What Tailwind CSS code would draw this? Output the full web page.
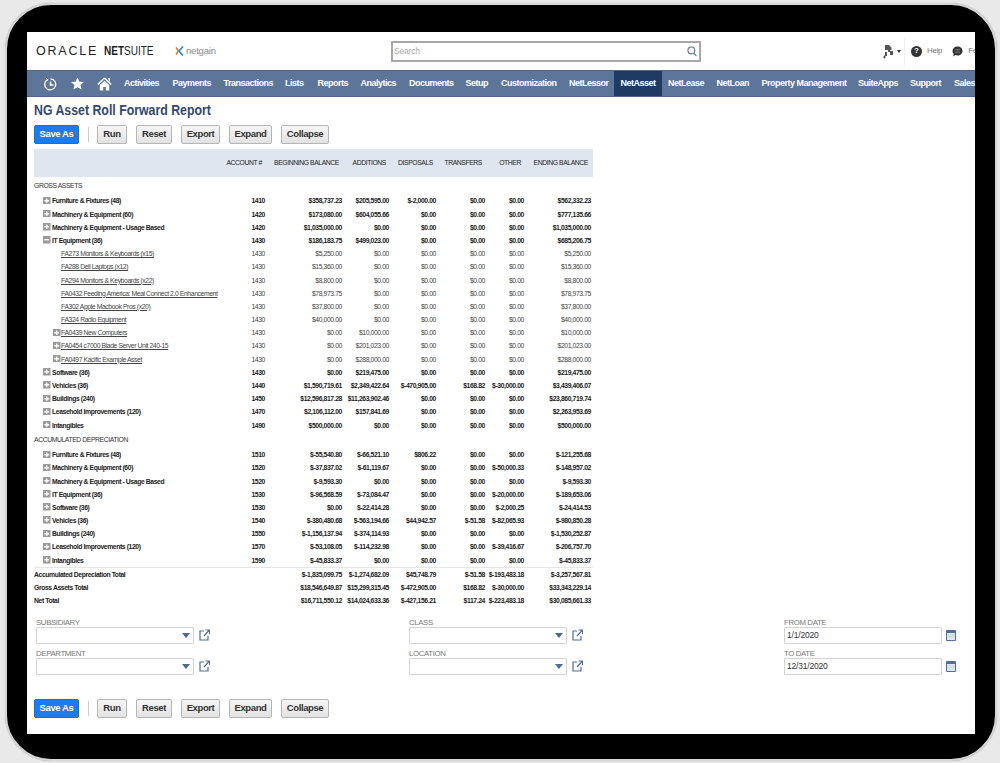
<!DOCTYPE html>
<html lang="en">
<head>
  <meta charset="UTF-8" />
  <title>NG Asset Roll Forward Report</title>
  <script src="https://cdn.jsdelivr.net/npm/@tailwindcss/browser@4"></script>
</head>
<body class="bg-[#e9e9e9] font-['Liberation_Sans',sans-serif] overflow-hidden">
<div class="w-[1000px] h-[763px] pt-[3px] pl-[5px]">
  <!-- tablet frame -->
  <div class="w-[992px] h-[758px] rounded-[46px] border-2 border-[#d6d6d6] bg-black pt-[27px] pl-[20px] shadow-[0_0_1px_#999]">
    <div class="w-[948px] h-[702px] bg-white overflow-hidden flex flex-col">

      <!-- top bar -->
      <header class="h-[38px] shrink-0 flex items-center overflow-hidden">
        <div class="ml-[9px] w-[130px] shrink-0 flex items-center text-[#222] whitespace-nowrap">
          <span class="text-[12.5px] tracking-[1.8px]">ORACLE</span>
          <span class="ml-[6px] inline-block origin-left scale-x-[0.8] text-[12.5px]"><b>NET</b>SUITE</span>
        </div>
        <div class="ml-[9px] w-[42px] shrink-0 flex items-center gap-[2px]">
          <svg class="shrink-0" width="9" height="10" viewBox="0 0 9 10"><path d="M1 1.500 3.500 5 1 8.500" fill="none" stroke="#e8792b" stroke-width="1.600"/><path d="M8 .5 4 5l4 4.500" fill="none" stroke="#2d8fd5" stroke-width="1.800"/></svg>
          <span class="text-[9.5px] tracking-[-0.2px] text-[#888]">netgain</span>
        </div>
        <div class="ml-[174px] w-[310px] shrink-0 h-[21px] border-2 border-[#a8a8a8] flex items-center justify-between pl-[1px] pr-[2px]">
          <span class="text-[8.5px] tracking-[-0.2px] text-[#aaa]">Search</span>
          <svg width="10" height="11" viewBox="0 0 11 12" fill="none" stroke="#5d7599" stroke-width="1.200"><circle cx="4.800" cy="4.800" r="3.800"/><path d="m7.500 7.800 2.800 3.200"/></svg>
        </div>
        <div class="ml-[181px] shrink-0 flex items-center whitespace-nowrap">
          <svg width="14" height="15" viewBox="0 0 14 15" fill="#555"><path d="M3 1h4l2.500 2.500V6H8v2H6V6H3zM8 7h3v4H8zM3 8h2v4H3z"/><path d="M1 13h3M2.500 11.500v3" stroke="#555" fill="none"/></svg>
          <svg class="ml-[1px]" width="4" height="3" viewBox="0 0 4 3" fill="#333"><path d="M0 0h4L2 3z"/></svg>
          <div class="ml-[3px] w-px h-[27px] bg-[#eee]"></div>
          <span class="ml-[6px] w-[11px] h-[11px] rounded-full bg-[#333] text-white text-[8px] font-bold flex items-center justify-center">?</span>
          <span class="ml-[5px] text-[8px] tracking-[-0.3px] text-[#777]">Help</span>
          <svg class="ml-[10px]" width="11" height="11" viewBox="0 0 11 11"><path d="M5.500.5C8.500.5 10.500 2.500 10.500 5s-2 4.500-5 4.500c-.8 0-1.500-.1-2-.4L1 10.500l.7-2.500C1 7.200.5 6.200.5 5 .5 2.500 2.500.5 5.500.5z" fill="#333"/><path d="M3 3.500h5M3 5h5M3 6.500h5" stroke="#888" stroke-width=".6"/></svg>
          <span class="ml-[5px] text-[8px] tracking-[-0.3px] text-[#777]">Feedback</span>
        </div>
      </header>

      <!-- nav -->
      <nav class="h-[27px] shrink-0 bg-[#5d7599] border-y border-[#4d6588] flex items-stretch text-white text-[9px] tracking-[-0.5px] font-bold whitespace-nowrap overflow-hidden">
        <div class="w-[97px] shrink-0 flex items-center pl-[17px]">
          <svg width="13" height="14" viewBox="0 0 13 14" fill="none" stroke="#fff" stroke-width="1.300"><path d="M3.500 2.500A5.500 5.500 0 1 0 6.500 1.800"/><path d="M1.800 1 3.800 2.600 2.200 4.400" stroke-width="1"/><path d="M6.500 4.500v3.500h3" stroke-width="1.500"/></svg>
          <svg class="ml-[14px]" width="13" height="13" viewBox="0 0 13 13" fill="#fff"><path d="M6.500.4 8.400 4.700l4.600.4-3.500 3 1.100 4.500-4.100-2.400-4.100 2.400 1.100-4.500L0 5.100l4.600-.4z"/></svg>
          <svg class="ml-[13px]" width="15" height="14" viewBox="0 0 15 14"><path d="M7.500 1 .8 7.500M7.500 1l6.700 6.500" fill="none" stroke="#fff" stroke-width="1.500"/><path d="M2.800 8 7.500 3.700 12.200 8v5.500H8.800V10H6.200v3.500H2.800z" fill="#fff"/><path d="M11 1.500h1.500v3" fill="#fff" stroke="#fff"/></svg>
        </div>
        <a class="flex items-center shrink-0 w-[48.5px]">Activities</a>
        <a class="flex items-center shrink-0 w-[51px]">Payments</a>
        <a class="flex items-center shrink-0 w-[61.5px]">Transactions</a>
        <a class="flex items-center shrink-0 w-[32.5px]">Lists</a>
        <a class="flex items-center shrink-0 w-[43px]">Reports</a>
        <a class="flex items-center shrink-0 w-[48.5px]">Analytics</a>
        <a class="flex items-center shrink-0 w-[56.5px]">Documents</a>
        <a class="flex items-center shrink-0 w-[35.5px]">Setup</a>
        <a class="flex items-center shrink-0 w-[68px]">Customization</a>
        <a class="flex items-center shrink-0 w-[45px]">NetLessor</a>
        <a class="flex items-center shrink-0 justify-center w-[48px] bg-[#1f3a63]">NetAsset</a>
        <a class="flex items-center shrink-0 w-[48.5px] ml-[6px]">NetLease</a>
        <a class="flex items-center shrink-0 w-[45px]">NetLoan</a>
        <a class="flex items-center shrink-0 w-[96.5px]">Property Management</a>
        <a class="flex items-center shrink-0 w-[52px]">SuiteApps</a>
        <a class="flex items-center shrink-0 w-[44px]">Support</a>
        <a class="flex items-center shrink-0">Sales</a>
      </nav>

      <main class="flex-1 pl-[7px]">
        <h1 class="h-[28px] flex items-center origin-left scale-x-[0.85] text-[14.5px] font-bold text-[#33486b] whitespace-nowrap">NG Asset Roll Forward Report</h1>

        <div class="h-[19px] flex items-stretch gap-[9px] text-[9.5px] tracking-[-0.4px] font-bold text-[#333]">
          <button class="w-[45px] rounded-[2px] bg-[#1c7cec] border border-[#1a6ed0] text-white">Save As</button>
          <span class="w-px -mr-[1px] my-[2px] bg-[#ccc]"></span>
          <button class="w-[30px] rounded-[2px] bg-gradient-to-b from-[#f6f6f6] to-[#e2e2e2] border border-[#b5b5b5]">Run</button>
          <button class="w-[36px] rounded-[2px] bg-gradient-to-b from-[#f6f6f6] to-[#e2e2e2] border border-[#b5b5b5]">Reset</button>
          <button class="w-[39px] rounded-[2px] bg-gradient-to-b from-[#f6f6f6] to-[#e2e2e2] border border-[#b5b5b5]">Export</button>
          <button class="w-[43px] rounded-[2px] bg-gradient-to-b from-[#f6f6f6] to-[#e2e2e2] border border-[#b5b5b5]">Expand</button>
          <button class="w-[48px] rounded-[2px] bg-gradient-to-b from-[#f6f6f6] to-[#e2e2e2] border border-[#b5b5b5]">Collapse</button>
        </div>

        <!-- report table -->
        <div class="mt-[5px] w-[559px] text-[6.8px] tracking-[-0.4px] text-[#222] whitespace-nowrap">
          <div class="h-[28px] bg-[#dfe6ef] pr-[2px] grid grid-cols-[201px_30px_77px_47px_47px_49px_39px_67px] items-center text-right [&>span]:pr-[3px]">
            <span></span><span class="-ml-[10px]">ACCOUNT #</span><span>BEGINNING BALANCE</span><span>ADDITIONS</span><span>DISPOSALS</span><span>TRANSFERS</span><span>OTHER</span><span>ENDING BALANCE</span>
          </div>

          <div class="h-[17.9px] flex items-center text-[#333]">GROSS ASSETS</div>
          <div class="pr-[2px] grid grid-cols-[201px_30px_77px_47px_47px_49px_39px_67px] auto-rows-[13.2px] items-center text-right [&>div]:contents">
            <div class="font-bold"><span class="flex items-center text-left pl-[9px]"><svg class="w-[7.5px] h-[7.5px] -mt-[2px] mr-[1.5px]" viewBox="0 0 8 8"><rect width="8" height="8" fill="#9a9a9a"/><path d="M1.500 4h5M4 1.500v5" stroke="#fff" stroke-width="1.400"/></svg>Furniture &amp; Fixtures (48)</span><span>1410</span><span>$358,737.23</span><span>$205,595.00</span><span>$-2,000.00</span><span>$0.00</span><span>$0.00</span><span>$562,332.23</span></div>
            <div class="font-bold"><span class="flex items-center text-left pl-[9px]"><svg class="w-[7.5px] h-[7.5px] -mt-[2px] mr-[1.5px]" viewBox="0 0 8 8"><rect width="8" height="8" fill="#9a9a9a"/><path d="M1.500 4h5M4 1.500v5" stroke="#fff" stroke-width="1.400"/></svg>Machinery &amp; Equipment (60)</span><span>1420</span><span>$173,080.00</span><span>$604,055.66</span><span>$0.00</span><span>$0.00</span><span>$0.00</span><span>$777,135.66</span></div>
            <div class="font-bold"><span class="flex items-center text-left pl-[9px]"><svg class="w-[7.5px] h-[7.5px] -mt-[2px] mr-[1.5px]" viewBox="0 0 8 8"><rect width="8" height="8" fill="#9a9a9a"/><path d="M1.500 4h5M4 1.500v5" stroke="#fff" stroke-width="1.400"/></svg>Machinery &amp; Equipment - Usage Based</span><span>1420</span><span>$1,035,000.00</span><span>$0.00</span><span>$0.00</span><span>$0.00</span><span>$0.00</span><span>$1,035,000.00</span></div>
            <div class="font-bold"><span class="flex items-center text-left pl-[9px]"><svg class="w-[7.5px] h-[7.5px] -mt-[2px] mr-[1.5px]" viewBox="0 0 8 8"><rect width="8" height="8" fill="#9a9a9a"/><path d="M1.500 4h5" stroke="#fff" stroke-width="1.400"/></svg>IT Equipment (36)</span><span>1430</span><span>$186,183.75</span><span>$499,023.00</span><span>$0.00</span><span>$0.00</span><span>$0.00</span><span>$685,206.75</span></div>
            <div class="text-[#444]"><span class="text-left pl-[27px] underline">FA273 Monitors &amp; Keyboards (x15)</span><span>1430</span><span>$5,250.00</span><span>$0.00</span><span>$0.00</span><span>$0.00</span><span>$0.00</span><span>$5,250.00</span></div>
            <div class="text-[#444]"><span class="text-left pl-[27px] underline">FA288 Dell Laptops (x12)</span><span>1430</span><span>$15,360.00</span><span>$0.00</span><span>$0.00</span><span>$0.00</span><span>$0.00</span><span>$15,360.00</span></div>
            <div class="text-[#444]"><span class="text-left pl-[27px] underline">FA294 Monitors &amp; Keyboards (x22)</span><span>1430</span><span>$8,800.00</span><span>$0.00</span><span>$0.00</span><span>$0.00</span><span>$0.00</span><span>$8,800.00</span></div>
            <div class="text-[#444]"><span class="text-left pl-[27px] underline">FA0432 Feeding America: Meal Connect 2.0 Enhancement</span><span>1430</span><span>$78,973.75</span><span>$0.00</span><span>$0.00</span><span>$0.00</span><span>$0.00</span><span>$78,973.75</span></div>
            <div class="text-[#444]"><span class="text-left pl-[27px] underline">FA302 Apple Macbook Pros (x20)</span><span>1430</span><span>$37,800.00</span><span>$0.00</span><span>$0.00</span><span>$0.00</span><span>$0.00</span><span>$37,800.00</span></div>
            <div class="text-[#444]"><span class="text-left pl-[27px] underline">FA324 Radio Equipment</span><span>1430</span><span>$40,000.00</span><span>$0.00</span><span>$0.00</span><span>$0.00</span><span>$0.00</span><span>$40,000.00</span></div>
            <div class="text-[#444]"><span class="flex items-center text-left pl-[19px]"><svg class="w-[7.5px] h-[7.5px] -mt-[2px] mr-[.5px] shrink-0" viewBox="0 0 8 8"><rect width="8" height="8" fill="#9a9a9a"/><path d="M1.500 4h5M4 1.500v5" stroke="#fff" stroke-width="1.400"/></svg><u>FA0439 New Computers</u></span><span>1430</span><span>$0.00</span><span>$10,000.00</span><span>$0.00</span><span>$0.00</span><span>$0.00</span><span>$10,000.00</span></div>
            <div class="text-[#444]"><span class="flex items-center text-left pl-[19px]"><svg class="w-[7.5px] h-[7.5px] -mt-[2px] mr-[.5px] shrink-0" viewBox="0 0 8 8"><rect width="8" height="8" fill="#9a9a9a"/><path d="M1.500 4h5M4 1.500v5" stroke="#fff" stroke-width="1.400"/></svg><u>FA0454 c7000 Blade Server Unit 240-15</u></span><span>1430</span><span>$0.00</span><span>$201,023.00</span><span>$0.00</span><span>$0.00</span><span>$0.00</span><span>$201,023.00</span></div>
            <div class="text-[#444]"><span class="flex items-center text-left pl-[19px]"><svg class="w-[7.5px] h-[7.5px] -mt-[2px] mr-[.5px] shrink-0" viewBox="0 0 8 8"><rect width="8" height="8" fill="#9a9a9a"/><path d="M1.500 4h5M4 1.500v5" stroke="#fff" stroke-width="1.400"/></svg><u>FA0497 Kacific Example Asset</u></span><span>1430</span><span>$0.00</span><span>$288,000.00</span><span>$0.00</span><span>$0.00</span><span>$0.00</span><span>$288,000.00</span></div>
            <div class="font-bold"><span class="flex items-center text-left pl-[9px]"><svg class="w-[7.5px] h-[7.5px] -mt-[2px] mr-[1.5px]" viewBox="0 0 8 8"><rect width="8" height="8" fill="#9a9a9a"/><path d="M1.500 4h5M4 1.500v5" stroke="#fff" stroke-width="1.400"/></svg>Software (36)</span><span>1430</span><span>$0.00</span><span>$219,475.00</span><span>$0.00</span><span>$0.00</span><span>$0.00</span><span>$219,475.00</span></div>
            <div class="font-bold"><span class="flex items-center text-left pl-[9px]"><svg class="w-[7.5px] h-[7.5px] -mt-[2px] mr-[1.5px]" viewBox="0 0 8 8"><rect width="8" height="8" fill="#9a9a9a"/><path d="M1.500 4h5M4 1.500v5" stroke="#fff" stroke-width="1.400"/></svg>Vehicles (36)</span><span>1440</span><span>$1,590,719.61</span><span>$2,349,422.64</span><span>$-470,905.00</span><span>$168.82</span><span>$-30,000.00</span><span>$3,439,406.07</span></div>
            <div class="font-bold"><span class="flex items-center text-left pl-[9px]"><svg class="w-[7.5px] h-[7.5px] -mt-[2px] mr-[1.5px]" viewBox="0 0 8 8"><rect width="8" height="8" fill="#9a9a9a"/><path d="M1.500 4h5M4 1.500v5" stroke="#fff" stroke-width="1.400"/></svg>Buildings (240)</span><span>1450</span><span>$12,596,817.28</span><span>$11,263,902.46</span><span>$0.00</span><span>$0.00</span><span>$0.00</span><span>$23,860,719.74</span></div>
            <div class="font-bold"><span class="flex items-center text-left pl-[9px]"><svg class="w-[7.5px] h-[7.5px] -mt-[2px] mr-[1.5px]" viewBox="0 0 8 8"><rect width="8" height="8" fill="#9a9a9a"/><path d="M1.500 4h5M4 1.500v5" stroke="#fff" stroke-width="1.400"/></svg>Leasehold Improvements (120)</span><span>1470</span><span>$2,106,112.00</span><span>$157,841.69</span><span>$0.00</span><span>$0.00</span><span>$0.00</span><span>$2,263,953.69</span></div>
            <div class="font-bold"><span class="flex items-center text-left pl-[9px]"><svg class="w-[7.5px] h-[7.5px] -mt-[2px] mr-[1.5px]" viewBox="0 0 8 8"><rect width="8" height="8" fill="#9a9a9a"/><path d="M1.500 4h5M4 1.500v5" stroke="#fff" stroke-width="1.400"/></svg>Intangibles</span><span>1490</span><span>$500,000.00</span><span>$0.00</span><span>$0.00</span><span>$0.00</span><span>$0.00</span><span>$500,000.00</span></div>
          </div>

          <div class="h-[16.4px] flex items-center text-[#333]">ACCUMULATED DEPRECIATION</div>
          <div class="pr-[2px] grid grid-cols-[201px_30px_77px_47px_47px_49px_39px_67px] auto-rows-[13.2px] items-center text-right font-bold [&>div]:contents">
            <div><span class="flex items-center text-left pl-[9px]"><svg class="w-[7.5px] h-[7.5px] -mt-[2px] mr-[1.5px]" viewBox="0 0 8 8"><rect width="8" height="8" fill="#9a9a9a"/><path d="M1.500 4h5M4 1.500v5" stroke="#fff" stroke-width="1.400"/></svg>Furniture &amp; Fixtures (48)</span><span>1510</span><span>$-55,540.80</span><span>$-66,521.10</span><span>$806.22</span><span>$0.00</span><span>$0.00</span><span>$-121,255.68</span></div>
            <div><span class="flex items-center text-left pl-[9px]"><svg class="w-[7.5px] h-[7.5px] -mt-[2px] mr-[1.5px]" viewBox="0 0 8 8"><rect width="8" height="8" fill="#9a9a9a"/><path d="M1.500 4h5M4 1.500v5" stroke="#fff" stroke-width="1.400"/></svg>Machinery &amp; Equipment (60)</span><span>1520</span><span>$-37,837.02</span><span>$-61,119.67</span><span>$0.00</span><span>$0.00</span><span>$-50,000.33</span><span>$-148,957.02</span></div>
            <div><span class="flex items-center text-left pl-[9px]"><svg class="w-[7.5px] h-[7.5px] -mt-[2px] mr-[1.5px]" viewBox="0 0 8 8"><rect width="8" height="8" fill="#9a9a9a"/><path d="M1.500 4h5M4 1.500v5" stroke="#fff" stroke-width="1.400"/></svg>Machinery &amp; Equipment - Usage Based</span><span>1520</span><span>$-9,593.30</span><span>$0.00</span><span>$0.00</span><span>$0.00</span><span>$0.00</span><span>$-9,593.30</span></div>
            <div><span class="flex items-center text-left pl-[9px]"><svg class="w-[7.5px] h-[7.5px] -mt-[2px] mr-[1.5px]" viewBox="0 0 8 8"><rect width="8" height="8" fill="#9a9a9a"/><path d="M1.500 4h5M4 1.500v5" stroke="#fff" stroke-width="1.400"/></svg>IT Equipment (36)</span><span>1530</span><span>$-96,568.59</span><span>$-73,084.47</span><span>$0.00</span><span>$0.00</span><span>$-20,000.00</span><span>$-189,653.06</span></div>
            <div><span class="flex items-center text-left pl-[9px]"><svg class="w-[7.5px] h-[7.5px] -mt-[2px] mr-[1.5px]" viewBox="0 0 8 8"><rect width="8" height="8" fill="#9a9a9a"/><path d="M1.500 4h5M4 1.500v5" stroke="#fff" stroke-width="1.400"/></svg>Software (36)</span><span>1530</span><span>$0.00</span><span>$-22,414.28</span><span>$0.00</span><span>$0.00</span><span>$-2,000.25</span><span>$-24,414.53</span></div>
            <div><span class="flex items-center text-left pl-[9px]"><svg class="w-[7.5px] h-[7.5px] -mt-[2px] mr-[1.5px]" viewBox="0 0 8 8"><rect width="8" height="8" fill="#9a9a9a"/><path d="M1.500 4h5M4 1.500v5" stroke="#fff" stroke-width="1.400"/></svg>Vehicles (36)</span><span>1540</span><span>$-380,480.68</span><span>$-563,194.66</span><span>$44,942.57</span><span>$-51.58</span><span>$-82,065.93</span><span>$-980,850.28</span></div>
            <div><span class="flex items-center text-left pl-[9px]"><svg class="w-[7.5px] h-[7.5px] -mt-[2px] mr-[1.5px]" viewBox="0 0 8 8"><rect width="8" height="8" fill="#9a9a9a"/><path d="M1.500 4h5M4 1.500v5" stroke="#fff" stroke-width="1.400"/></svg>Buildings (240)</span><span>1550</span><span>$-1,156,137.94</span><span>$-374,114.93</span><span>$0.00</span><span>$0.00</span><span>$0.00</span><span>$-1,530,252.87</span></div>
            <div><span class="flex items-center text-left pl-[9px]"><svg class="w-[7.5px] h-[7.5px] -mt-[2px] mr-[1.5px]" viewBox="0 0 8 8"><rect width="8" height="8" fill="#9a9a9a"/><path d="M1.500 4h5M4 1.500v5" stroke="#fff" stroke-width="1.400"/></svg>Leasehold Improvements (120)</span><span>1570</span><span>$-53,108.05</span><span>$-114,232.98</span><span>$0.00</span><span>$0.00</span><span>$-39,416.67</span><span>$-206,757.70</span></div>
            <div><span class="flex items-center text-left pl-[9px]"><svg class="w-[7.5px] h-[7.5px] -mt-[2px] mr-[1.5px]" viewBox="0 0 8 8"><rect width="8" height="8" fill="#9a9a9a"/><path d="M1.500 4h5M4 1.500v5" stroke="#fff" stroke-width="1.400"/></svg>Intangibles</span><span>1590</span><span>$-45,833.37</span><span>$0.00</span><span>$0.00</span><span>$0.00</span><span>$0.00</span><span>$-45,833.37</span></div>
          </div>

          <div class="pr-[2px] border-t border-[#e6e6e6] grid grid-cols-[201px_30px_77px_47px_47px_49px_39px_67px] auto-rows-[13.2px] items-center text-right font-bold [&>div]:contents">
            <div><span class="text-left">Accumulated Depreciation Total</span><span></span><span>$-1,835,099.75</span><span>$-1,274,682.09</span><span>$45,748.79</span><span>$-51.58</span><span>$-193,483.18</span><span>$-3,257,567.81</span></div>
            <div><span class="text-left">Gross Assets Total</span><span></span><span>$18,546,649.87</span><span>$15,299,315.45</span><span>$-472,905.00</span><span>$168.82</span><span>$-30,000.00</span><span>$33,343,229.14</span></div>
            <div><span class="text-left">Net Total</span><span></span><span>$16,711,550.12</span><span>$14,024,633.36</span><span>$-427,156.21</span><span>$117.24</span><span>$-223,483.18</span><span>$30,085,661.33</span></div>
          </div>
        </div>

        <!-- filters -->
        <div class="mt-[10px] ml-[2px] grid grid-cols-[373px_375px_1fr] grid-rows-[31px_31px] text-[7.8px] tracking-[-0.35px] text-[#777]">
          <div class="flex flex-col">
            <label class="h-[9px] leading-[9px]">SUBSIDIARY</label>
            <div class="flex items-center">
              <div class="w-[158px] h-[17px] border border-[#d4d4d4] rounded-[1px] flex items-center justify-end pr-[3px]"><svg width="8" height="5" viewBox="0 0 8 5" fill="#4f6a92"><path d="M0 0h8L4 5z"/></svg></div>
              <svg class="ml-[5px]" width="11" height="12" viewBox="0 0 11 12" fill="none" stroke="#4f6f9c" stroke-width="1.200"><path d="M5 2H1v9h8V7"/><path d="M5 7 10 1.500M6.500 1h4v4"/></svg>
            </div>
          </div>
          <div class="flex flex-col">
            <label class="h-[9px] leading-[9px]">CLASS</label>
            <div class="flex items-center">
              <div class="w-[158px] h-[17px] border border-[#d4d4d4] rounded-[1px] flex items-center justify-end pr-[3px]"><svg width="8" height="5" viewBox="0 0 8 5" fill="#4f6a92"><path d="M0 0h8L4 5z"/></svg></div>
              <svg class="ml-[5px]" width="11" height="12" viewBox="0 0 11 12" fill="none" stroke="#4f6f9c" stroke-width="1.200"><path d="M5 2H1v9h8V7"/><path d="M5 7 10 1.500M6.500 1h4v4"/></svg>
            </div>
          </div>
          <div class="flex flex-col">
            <label class="h-[9px] leading-[9px]">FROM DATE</label>
            <div class="flex items-center">
              <div class="w-[158px] h-[17px] border border-[#d4d4d4] rounded-[1px] flex items-center pl-[2px] text-[8.5px] tracking-[-0.2px] text-[#333]">1/1/2020</div>
              <svg class="ml-[4px]" width="10" height="11" viewBox="0 0 10 11"><rect width="10" height="11" rx="1" fill="#4f6f9c"/><rect x="1" y="3" width="8" height="7" fill="#e4e8ee"/><path d="M1 5h8M1 7h8" stroke="#b9c3d2" stroke-width=".6"/></svg>
            </div>
          </div>
          <div class="flex flex-col">
            <label class="h-[9px] leading-[9px]">DEPARTMENT</label>
            <div class="flex items-center">
              <div class="w-[158px] h-[17px] border border-[#d4d4d4] rounded-[1px] flex items-center justify-end pr-[3px]"><svg width="8" height="5" viewBox="0 0 8 5" fill="#4f6a92"><path d="M0 0h8L4 5z"/></svg></div>
              <svg class="ml-[5px]" width="11" height="12" viewBox="0 0 11 12" fill="none" stroke="#4f6f9c" stroke-width="1.200"><path d="M5 2H1v9h8V7"/><path d="M5 7 10 1.500M6.500 1h4v4"/></svg>
            </div>
          </div>
          <div class="flex flex-col">
            <label class="h-[9px] leading-[9px]">LOCATION</label>
            <div class="flex items-center">
              <div class="w-[158px] h-[17px] border border-[#d4d4d4] rounded-[1px] flex items-center justify-end pr-[3px]"><svg width="8" height="5" viewBox="0 0 8 5" fill="#4f6a92"><path d="M0 0h8L4 5z"/></svg></div>
              <svg class="ml-[5px]" width="11" height="12" viewBox="0 0 11 12" fill="none" stroke="#4f6f9c" stroke-width="1.200"><path d="M5 2H1v9h8V7"/><path d="M5 7 10 1.500M6.500 1h4v4"/></svg>
            </div>
          </div>
          <div class="flex flex-col">
            <label class="h-[9px] leading-[9px]">TO DATE</label>
            <div class="flex items-center">
              <div class="w-[158px] h-[17px] border border-[#d4d4d4] rounded-[1px] flex items-center pl-[2px] text-[8.5px] tracking-[-0.2px] text-[#333]">12/31/2020</div>
              <svg class="ml-[4px]" width="10" height="11" viewBox="0 0 10 11"><rect width="10" height="11" rx="1" fill="#4f6f9c"/><rect x="1" y="3" width="8" height="7" fill="#e4e8ee"/><path d="M1 5h8M1 7h8" stroke="#b9c3d2" stroke-width=".6"/></svg>
            </div>
          </div>
        </div>

        <div class="mt-[19px] h-[19px] flex items-stretch gap-[9px] text-[9.5px] tracking-[-0.4px] font-bold text-[#333]">
          <button class="w-[45px] rounded-[2px] bg-[#1c7cec] border border-[#1a6ed0] text-white">Save As</button>
          <span class="w-px -mr-[1px] my-[2px] bg-[#ccc]"></span>
          <button class="w-[30px] rounded-[2px] bg-gradient-to-b from-[#f6f6f6] to-[#e2e2e2] border border-[#b5b5b5]">Run</button>
          <button class="w-[36px] rounded-[2px] bg-gradient-to-b from-[#f6f6f6] to-[#e2e2e2] border border-[#b5b5b5]">Reset</button>
          <button class="w-[39px] rounded-[2px] bg-gradient-to-b from-[#f6f6f6] to-[#e2e2e2] border border-[#b5b5b5]">Export</button>
          <button class="w-[43px] rounded-[2px] bg-gradient-to-b from-[#f6f6f6] to-[#e2e2e2] border border-[#b5b5b5]">Expand</button>
          <button class="w-[48px] rounded-[2px] bg-gradient-to-b from-[#f6f6f6] to-[#e2e2e2] border border-[#b5b5b5]">Collapse</button>
        </div>
      </main>
    </div>
  </div>
</div>
</body>
</html>
